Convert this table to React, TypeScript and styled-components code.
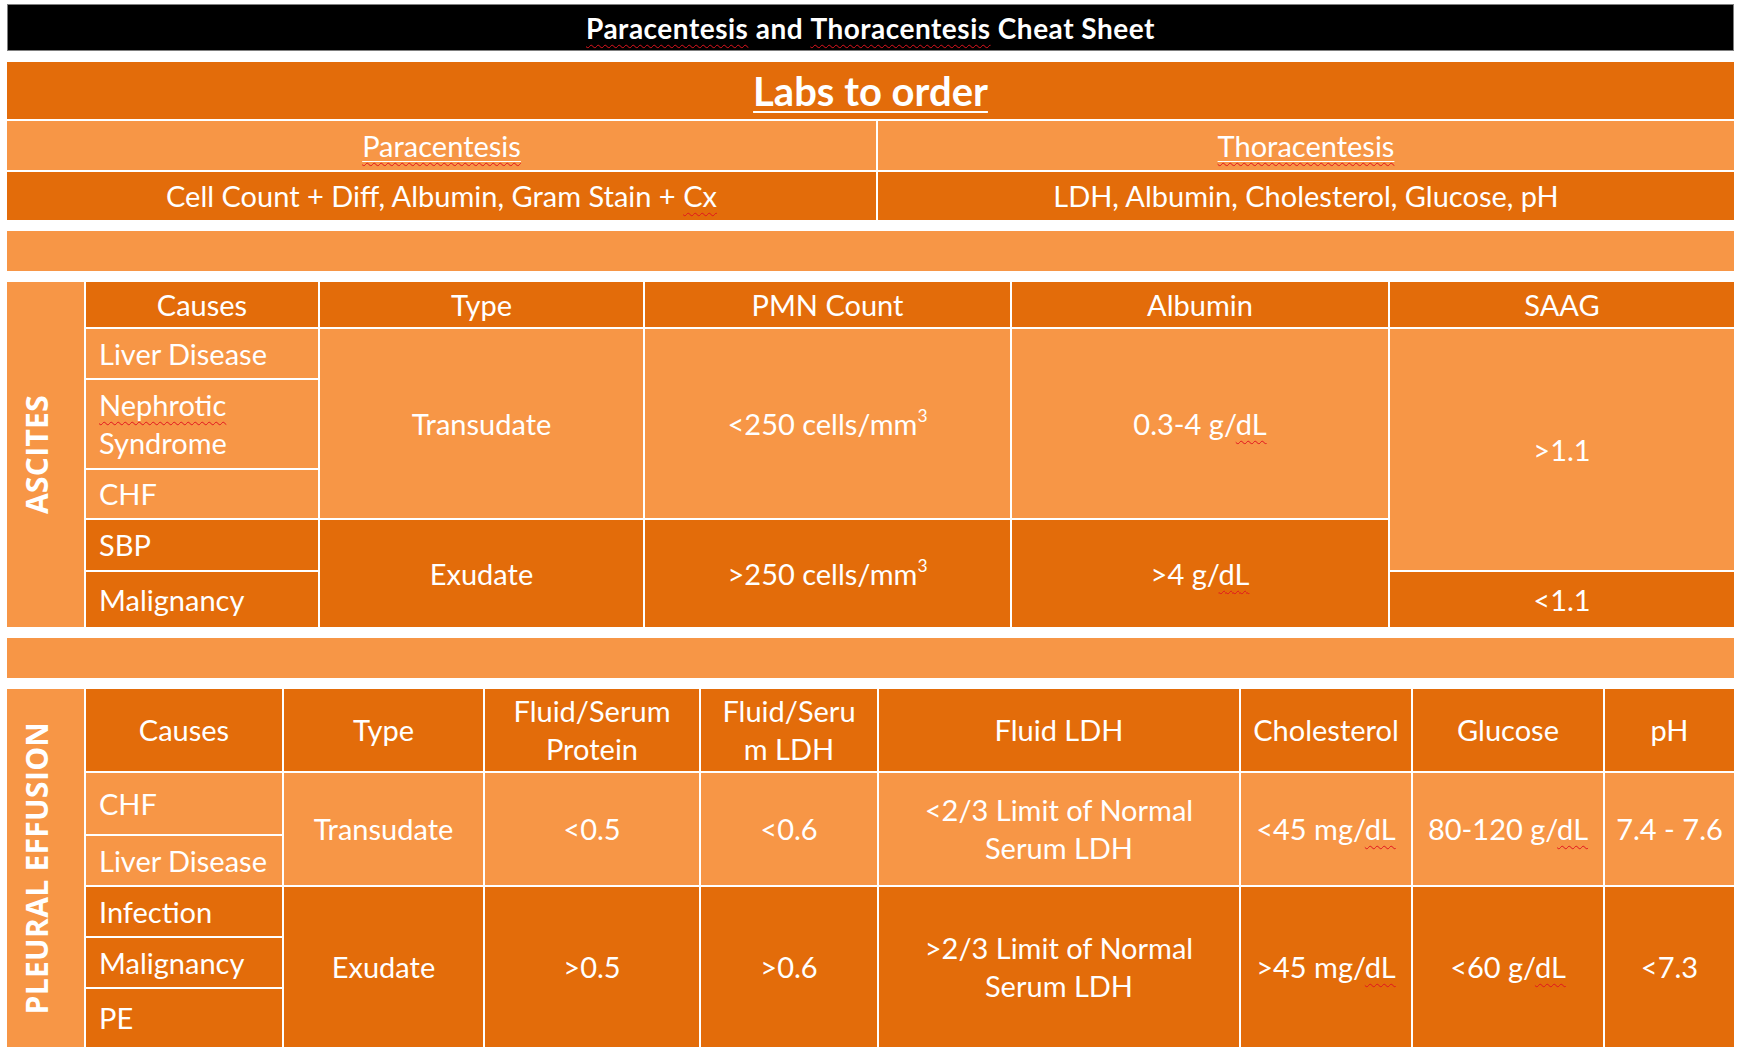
import type { ReactNode } from "react";
import styled, { createGlobalStyle } from "styled-components";

const DARK = "#e36c0a";
const LIGHT = "#f79646";

const GlobalStyle = createGlobalStyle`
  html, body {
    margin: 0;
    padding: 0;
    background: #ffffff;
  }
  body {
    font-family: Lato, "Open Sans", "Liberation Sans", sans-serif;
    color: #ffffff;
  }
`;

type Tone = "dark" | "light";

type CellProps = {
  tone: Tone;
  rows?: number;
  left?: boolean;
  children: ReactNode;
};

// wraps the text in one span so spaces between text and inline parts survive flex layout
function Cell({ tone, rows, left, children }: CellProps) {
  return (
    <CellBox $tone={tone} $rows={rows} $left={left}>
      <span>{children}</span>
    </CellBox>
  );
}

export default function App() {
  return (
    <Page>
      <GlobalStyle />
      <TitleBar>
        <Squiggle>Paracentesis</Squiggle> and <Squiggle>Thoracentesis</Squiggle> Cheat Sheet
      </TitleBar>

      <LabsGrid>
        <LabsTitle>Labs to order</LabsTitle>
        <Cell tone="light">
          <Underlined>
            <Squiggle>Paracentesis</Squiggle>
          </Underlined>
        </Cell>
        <Cell tone="light">
          <Underlined>
            <Squiggle>Thoracentesis</Squiggle>
          </Underlined>
        </Cell>
        <Cell tone="dark">
          Cell Count + Diff, Albumin, Gram Stain + <Squiggle>Cx</Squiggle>
        </Cell>
        <Cell tone="dark">LDH, Albumin, Cholesterol, Glucose, pH</Cell>
      </LabsGrid>

      <Spacer />

      <AscitesGrid>
        <LabelCell $rows={6}>
          <SideLabel>ASCITES</SideLabel>
        </LabelCell>
        <Cell tone="dark">Causes</Cell>
        <Cell tone="dark">Type</Cell>
        <Cell tone="dark">PMN Count</Cell>
        <Cell tone="dark">Albumin</Cell>
        <Cell tone="dark">SAAG</Cell>

        <Cell tone="light" left>Liver Disease</Cell>
        <Cell tone="light" rows={3}>Transudate</Cell>
        <Cell tone="light" rows={3}>
          &lt;250 cells/mm<Sup>3</Sup>
        </Cell>
        <Cell tone="light" rows={3}>
          0.3-4 g/<Squiggle>dL</Squiggle>
        </Cell>
        <Cell tone="light" rows={4}>&gt;1.1</Cell>

        <Cell tone="light" left>
          <Squiggle>Nephrotic</Squiggle>
          <br />
          Syndrome
        </Cell>
        <Cell tone="light" left>CHF</Cell>

        <Cell tone="dark" left>SBP</Cell>
        <Cell tone="dark" rows={2}>Exudate</Cell>
        <Cell tone="dark" rows={2}>
          &gt;250 cells/mm<Sup>3</Sup>
        </Cell>
        <Cell tone="dark" rows={2}>
          &gt;4 g/<Squiggle>dL</Squiggle>
        </Cell>
        <Cell tone="dark" left>Malignancy</Cell>
        <Cell tone="dark">&lt;1.1</Cell>
      </AscitesGrid>

      <Spacer />

      <PleuralGrid>
        <LabelCell $rows={6}>
          <SideLabel>PLEURAL EFFUSION</SideLabel>
        </LabelCell>
        <Cell tone="dark">Causes</Cell>
        <Cell tone="dark">Type</Cell>
        <Cell tone="dark">
          Fluid/Serum
          <br />
          Protein
        </Cell>
        <Cell tone="dark">
          Fluid/Seru
          <br />m LDH
        </Cell>
        <Cell tone="dark">Fluid LDH</Cell>
        <Cell tone="dark">Cholesterol</Cell>
        <Cell tone="dark">Glucose</Cell>
        <Cell tone="dark">pH</Cell>

        <Cell tone="light" left>CHF</Cell>
        <Cell tone="light" rows={2}>Transudate</Cell>
        <Cell tone="light" rows={2}>&lt;0.5</Cell>
        <Cell tone="light" rows={2}>&lt;0.6</Cell>
        <Cell tone="light" rows={2}>
          &lt;2/3 Limit of Normal
          <br />
          Serum LDH
        </Cell>
        <Cell tone="light" rows={2}>
          &lt;45 mg/<Squiggle>dL</Squiggle>
        </Cell>
        <Cell tone="light" rows={2}>
          80-120 g/<Squiggle>dL</Squiggle>
        </Cell>
        <Cell tone="light" rows={2}>7.4 - 7.6</Cell>
        <Cell tone="light" left>Liver Disease</Cell>

        <Cell tone="dark" left>Infection</Cell>
        <Cell tone="dark" rows={3}>Exudate</Cell>
        <Cell tone="dark" rows={3}>&gt;0.5</Cell>
        <Cell tone="dark" rows={3}>&gt;0.6</Cell>
        <Cell tone="dark" rows={3}>
          &gt;2/3 Limit of Normal
          <br />
          Serum LDH
        </Cell>
        <Cell tone="dark" rows={3}>
          &gt;45 mg/<Squiggle>dL</Squiggle>
        </Cell>
        <Cell tone="dark" rows={3}>
          &lt;60 g/<Squiggle>dL</Squiggle>
        </Cell>
        <Cell tone="dark" rows={3}>&lt;7.3</Cell>
        <Cell tone="dark" left>Malignancy</Cell>
        <Cell tone="dark" left>PE</Cell>
      </PleuralGrid>
    </Page>
  );
}

const Page = styled.div`
  width: 1727px;
  margin-left: 7px;
  padding-top: 4px;
  display: flex;
  flex-direction: column;
  gap: 11px;
`;

const TitleBar = styled.div`
  height: 45px;
  background: #000000;
  border: 1px solid #7f7f7f;
  display: flex;
  align-items: center;
  justify-content: center;
  font-size: 28px;
  font-weight: 700;
  letter-spacing: 0.5px;
  white-space: pre;
`;

const Squiggle = styled.span`
  text-decoration: underline wavy #e0141e;
  text-decoration-thickness: 1px;
  text-underline-offset: 5px;
`;

const Underlined = styled.span`
  text-decoration: underline;
  text-decoration-thickness: 1px;
  text-underline-offset: 4px;
`;

const Grid = styled.div`
  display: grid;
  gap: 2px;
  background: #ffffff;
`;

const LabsGrid = styled(Grid)`
  grid-template-columns: 869px 856px;
  grid-template-rows: 57px 49px 48px;
`;

const LabsTitle = styled.div`
  grid-column: 1 / 3;
  background: ${DARK};
  display: flex;
  align-items: center;
  justify-content: center;
  font-size: 40px;
  font-weight: 700;
  text-decoration: underline;
  text-decoration-thickness: 2px;
  text-underline-offset: 5px;
`;

const Spacer = styled.div`
  height: 40px;
  background: ${LIGHT};
`;

const AscitesGrid = styled(Grid)`
  grid-template-columns: 77px 232px 323px 365px 376px 344px;
  grid-template-rows: 45px 49px 88px 48px 50px 55px;
`;

const PleuralGrid = styled(Grid)`
  grid-template-columns: 77px 196px 199px 214px 176px 360px 170px 190px 129px;
  grid-template-rows: 82px 61px 49px 49px 49px 58px;
`;

const CellBox = styled.div<{ $tone: Tone; $rows?: number; $left?: boolean }>`
  grid-row: span ${(p) => p.$rows ?? 1};
  background: ${(p) => (p.$tone === "dark" ? DARK : LIGHT)};
  display: flex;
  align-items: center;
  justify-content: ${(p) => (p.$left ? "flex-start" : "center")};
  text-align: ${(p) => (p.$left ? "left" : "center")};
  padding: ${(p) => (p.$left ? "0 8px 0 13px" : "0 4px")};
  font-size: 29px;
  line-height: 38px;
  white-space: nowrap;
  overflow: hidden;
`;

const LabelCell = styled.div<{ $rows: number }>`
  grid-row: span ${(p) => p.$rows};
  background: ${LIGHT};
  display: flex;
  align-items: center;
  justify-content: center;
  padding-right: 18px;
`;

const Sup = styled.sup`
  font-size: 0.6em;
  line-height: 0;
  vertical-align: 0.75em;
`;

const SideLabel = styled.div`
  writing-mode: vertical-rl;
  transform: rotate(180deg);
  font-family: "Open Sans", "DejaVu Sans", sans-serif;
  font-weight: 700;
  font-size: 30px;
  line-height: 1;
  letter-spacing: 0.3px;
  white-space: nowrap;
`;
